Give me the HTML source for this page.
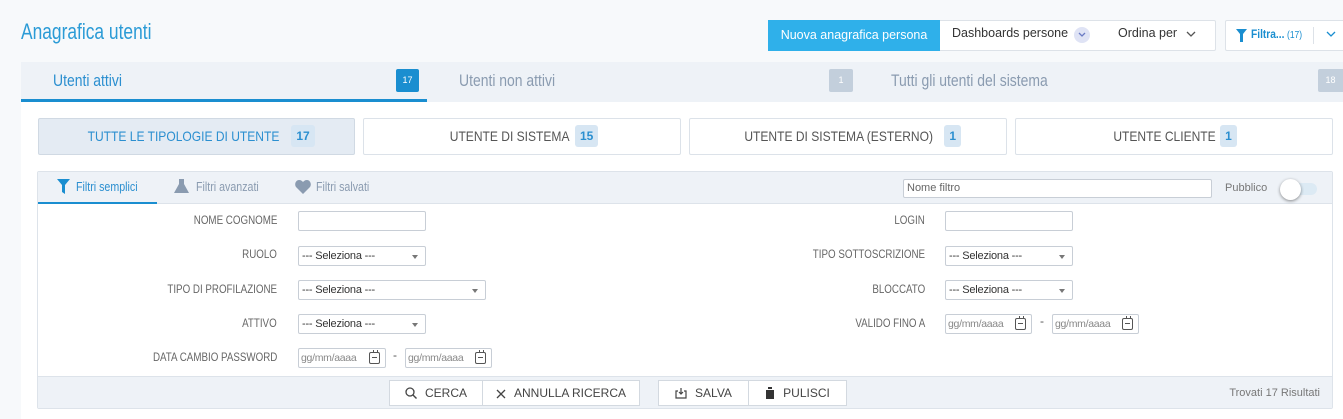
<!DOCTYPE html><html><head><meta charset="utf-8"><style>
*{box-sizing:border-box;margin:0;padding:0}
body{width:1343px;height:419px;background:#f7f9fb;font-family:"Liberation Sans",sans-serif;position:relative;overflow:hidden;color:#555}
.a{position:absolute}
.n{display:inline-block;transform:scaleX(.82);transform-origin:left center;white-space:nowrap}
.lbl{position:absolute;font-size:11.5px;color:#666;text-align:right;width:250px;white-space:nowrap}
.lbl span{display:inline-block;transform:scaleX(.85);transform-origin:right center}
.inp{position:absolute;height:20px;border:1px solid #c8ced6;background:#fff;border-radius:2px;font-size:11px;color:#333;padding:3px 4px;white-space:nowrap}
.sel{padding:3px 3px;letter-spacing:-.2px}
.sel::after{content:"";position:absolute;right:7px;top:8px;border:3.5px solid transparent;border-top:4px solid #777}
.date{color:#888;font-size:10.5px;padding:3px 2px;letter-spacing:-.3px}
.cal{position:absolute;right:5px;top:3px;width:11px;height:12px;border:1.5px solid #555;border-radius:2px}
.cal::before{content:"";position:absolute;left:3px;top:-3px;width:3px;height:3px;border-left:1.5px solid #555;border-right:1.5px solid #555}
.cal::after{content:"";position:absolute;left:2px;right:2px;top:4px;border-top:1.5px solid #555}
.tb{position:absolute;top:118px;height:37px;border:1px solid #dce2e9;background:#fff;border-radius:2px;font-size:14px;color:#555;text-align:center;line-height:35px;white-space:nowrap}
.tb>span.t{display:inline-block;transform:scaleX(.86);margin:0 -6px}
.bd{display:inline-block;background:#d7e6f3;color:#2b8fd0;font-size:12px;font-weight:bold;border-radius:3px;padding:0 5px;line-height:22px;vertical-align:1px;margin-left:2px}
.fb{position:absolute;top:380px;height:26px;border:1px solid #d3d9e0;background:#fff;font-size:12px;color:#444;line-height:24px;text-align:center;white-space:nowrap}
.fb svg{vertical-align:-2px;margin-right:8px}
</style></head><body>
<div class="a" style="left:21px;top:19px;font-size:22px;color:#2b9bd6"><span class="n" style="transform:scaleX(.79)">Anagrafica utenti</span></div>
<div class="a" style="left:768px;top:20px;width:448px;height:31px;border:1px solid #dde2e8;background:#fff;border-radius:2px"></div>
<div class="a" style="left:768px;top:20px;width:172px;height:31px;background:#2fb0ea;color:#fff;font-size:12.5px;line-height:30px;text-align:center">Nuova anagrafica persona</div>
<div class="a" style="left:952px;top:26px;font-size:12.5px;color:#333">Dashboards persone</div>
<div class="a" style="left:1074px;top:27px;width:16px;height:16px;border-radius:50%;background:#dfe3f5"></div>
<svg class="a" style="left:1078px;top:32px" width="8" height="6" viewBox="0 0 8 6"><path d="M1 1L4 4L7 1" fill="none" stroke="#6a7bc4" stroke-width="1.3"/></svg>
<div class="a" style="left:1118px;top:26px;font-size:12.5px;color:#333">Ordina per</div>
<svg class="a" style="left:1186px;top:31px" width="10" height="7" viewBox="0 0 10 7"><path d="M1 1L5 5L9 1" fill="none" stroke="#555" stroke-width="1.3"/></svg>
<div class="a" style="left:1225px;top:20px;width:130px;height:31px;border:1px solid #dde2e8;background:#fff;border-radius:2px"></div>
<svg class="a" style="left:1236px;top:29px" width="11" height="13" viewBox="0 0 11 13"><path d="M0 0H11L7 5V13H4V5Z" fill="#1a8ed0"/></svg>
<div class="a" style="left:1251px;top:27px;font-size:12px;font-weight:bold;color:#1a8ed0"><span class="n" style="transform:scaleX(.85)">Filtra...<span style="font-weight:normal;font-size:10px;margin-left:3px">(17)</span></span></div>
<div class="a" style="left:1313px;top:27px;height:17px;border-left:1px solid #dde2e8"></div>
<svg class="a" style="left:1326px;top:31px" width="10" height="7" viewBox="0 0 10 7"><path d="M1 1L5 5L9 1" fill="none" stroke="#1a8ed0" stroke-width="1.3"/></svg>

<div class="a" style="left:21px;top:62px;width:1322px;height:40px;background:#eef2f7"></div>
<div class="a" style="left:21px;top:99px;width:406px;height:3px;background:#1a8ed0"></div>
<div class="a" style="left:53px;top:71px;font-size:17px;color:#2b8fd0"><span class="n">Utenti attivi</span></div>
<div class="a" style="left:396px;top:69px;width:23px;height:23px;background:#1a8ed0;color:#fff;font-size:9px;text-align:center;line-height:23px;border-radius:2px">17</div>
<div class="a" style="left:459px;top:71px;font-size:17px;color:#8a9bb0"><span class="n">Utenti non attivi</span></div>
<div class="a" style="left:829px;top:69px;width:24px;height:23px;background:#c3cfdc;color:#fff;font-size:9px;text-align:center;line-height:23px;border-radius:2px">1</div>
<div class="a" style="left:891px;top:71px;font-size:17px;color:#8a9bb0"><span class="n">Tutti gli utenti del sistema</span></div>
<div class="a" style="left:1318px;top:69px;width:25px;height:23px;background:#c3cfdc;color:#fff;font-size:9px;text-align:center;line-height:23px;border-radius:2px 0 0 2px">18</div>
<div class="a" style="left:21px;top:102px;width:1322px;height:317px;background:#fff"></div>

<div class="tb" style="left:38px;width:317px;background:#e4ebf3;color:#2b8fd0;border-color:#d0d9e3"><span class="t">TUTTE LE TIPOLOGIE DI UTENTE</span><span class="bd">17</span></div>
<div class="tb" style="left:363px;width:318px"><span class="t">UTENTE DI SISTEMA</span><span class="bd">15</span></div>
<div class="tb" style="left:689px;width:318px"><span class="t">UTENTE DI SISTEMA (ESTERNO)</span><span class="bd">1</span></div>
<div class="tb" style="left:1015px;width:318px"><span class="t">UTENTE CLIENTE</span><span class="bd">1</span></div>

<div class="a" style="left:37px;top:171px;width:1296px;height:238px;border:1px solid #dde3ea;border-radius:2px"></div>
<div class="a" style="left:38px;top:172px;width:1294px;height:32px;background:#eef2f7;border-bottom:1px solid #dde3ea"></div>
<div class="a" style="left:38px;top:202px;width:119px;height:2px;background:#1a8ed0"></div>
<svg class="a" style="left:57px;top:179px" width="13" height="15" viewBox="0 0 13 15"><path d="M0 0H13L8 6V15L5 13V6Z" fill="#1a8ed0"/></svg>
<div class="a" style="left:76px;top:179px;font-size:13px;color:#2b8fd0"><span class="n">Filtri semplici</span></div>
<svg class="a" style="left:174px;top:179px" width="15" height="15" viewBox="0 0 15 15"><path d="M5 0H10V5L15 14H0L5 5Z" fill="#8a9bb0"/></svg>
<div class="a" style="left:196px;top:179px;font-size:13px;color:#8a9bb0"><span class="n">Filtri avanzati</span></div>
<svg class="a" style="left:295px;top:180px" width="16" height="14" viewBox="0 0 16 14"><path d="M8 14L1 7C-1 4 1 0 4 0C6 0 7 1 8 2C9 1 10 0 12 0C15 0 17 4 15 7Z" fill="#8a9bb0"/></svg>
<div class="a" style="left:316px;top:179px;font-size:13px;color:#8a9bb0"><span class="n">Filtri salvati</span></div>
<div class="inp" style="left:903px;top:179px;width:309px;height:19px;font-size:11px;color:#666;padding:2px 3px">Nome filtro</div>
<div class="a" style="left:1225px;top:182px;font-size:11px;color:#777">Pubblico</div>
<div class="a" style="left:1283px;top:183px;width:34px;height:12px;border-radius:6px;background:#dceaf4"></div>
<div class="a" style="left:1280px;top:179px;width:21px;height:21px;border-radius:50%;background:#fff;box-shadow:0 1px 3px rgba(0,0,0,.45)"></div>

<div class="lbl" style="left:27px;top:215px"><span>NOME COGNOME</span></div>
<div class="inp" style="left:298px;top:211px;width:128px"></div>
<div class="lbl" style="left:27px;top:249px"><span>RUOLO</span></div>
<div class="inp sel" style="left:298px;top:246px;width:128px">--- Seleziona ---</div>
<div class="lbl" style="left:27px;top:284px"><span>TIPO DI PROFILAZIONE</span></div>
<div class="inp sel" style="left:298px;top:280px;width:188px">--- Seleziona ---</div>
<div class="lbl" style="left:27px;top:318px"><span>ATTIVO</span></div>
<div class="inp sel" style="left:298px;top:314px;width:128px">--- Seleziona ---</div>
<div class="lbl" style="left:27px;top:352px"><span>DATA CAMBIO PASSWORD</span></div>
<div class="inp date" style="left:298px;top:348px;width:88px">gg/mm/aaaa<span class="cal"></span></div>
<div class="a" style="left:393px;top:348px;font-size:12px">-</div>
<div class="inp date" style="left:405px;top:348px;width:87px">gg/mm/aaaa<span class="cal"></span></div>

<div class="lbl" style="left:675px;top:215px"><span>LOGIN</span></div>
<div class="inp" style="left:945px;top:211px;width:128px"></div>
<div class="lbl" style="left:675px;top:249px"><span>TIPO SOTTOSCRIZIONE</span></div>
<div class="inp sel" style="left:945px;top:246px;width:128px">--- Seleziona ---</div>
<div class="lbl" style="left:675px;top:284px"><span>BLOCCATO</span></div>
<div class="inp sel" style="left:945px;top:280px;width:128px">--- Seleziona ---</div>
<div class="lbl" style="left:675px;top:318px"><span>VALIDO FINO A</span></div>
<div class="inp date" style="left:945px;top:314px;width:87px">gg/mm/aaaa<span class="cal"></span></div>
<div class="a" style="left:1040px;top:314px;font-size:12px">-</div>
<div class="inp date" style="left:1052px;top:314px;width:87px">gg/mm/aaaa<span class="cal"></span></div>

<div class="a" style="left:38px;top:376px;width:1294px;height:32px;background:#eef2f7;border-top:1px solid #dde3ea"></div>
<div class="fb" style="left:389px;width:94px"><svg width="12" height="12" viewBox="0 0 12 12"><circle cx="5" cy="5" r="4" fill="none" stroke="#444" stroke-width="1.3"/><path d="M8 8L11.5 11.5" stroke="#444" stroke-width="1.4"/></svg>CERCA</div>
<div class="fb" style="left:482px;width:158px"><svg width="10" height="10" viewBox="0 0 10 10"><path d="M1 1L9 9M9 1L1 9" stroke="#444" stroke-width="1.3"/></svg>ANNULLA RICERCA</div>
<div class="fb" style="left:658px;width:91px"><svg width="12" height="11" viewBox="0 0 12 11"><path d="M3 3H1V10H11V3H9M6 0V6M4 4L6 6L8 4" fill="none" stroke="#444" stroke-width="1.2"/></svg>SALVA</div>
<div class="fb" style="left:748px;width:99px"><svg width="10" height="12" viewBox="0 0 10 12"><path d="M0 2H10M3 2V0H7V2M1 3H9V12H1Z" fill="#333"/></svg>PULISCI</div>
<div class="a" style="left:1200px;top:387px;width:120px;text-align:right;font-size:11px;color:#777">Trovati 17 Risultati</div>
</body></html>
